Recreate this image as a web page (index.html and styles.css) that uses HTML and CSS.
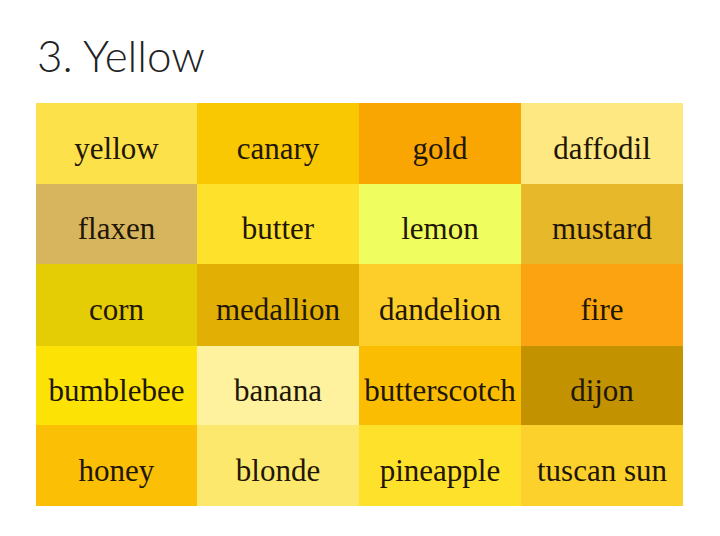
FILE: index.html
```html
<!DOCTYPE html>
<html>
<head>
<meta charset="utf-8">
<link rel="stylesheet" href="styles.css">
</head>
<body>
<main class="page">
  <h1 class="title">3. Yellow</h1>
  <div class="swatches">
    <div class="sw c-yellow">yellow</div>
    <div class="sw c-canary">canary</div>
    <div class="sw c-gold">gold</div>
    <div class="sw c-daffodil">daffodil</div>
    <div class="sw c-flaxen">flaxen</div>
    <div class="sw c-butter">butter</div>
    <div class="sw c-lemon">lemon</div>
    <div class="sw c-mustard">mustard</div>
    <div class="sw c-corn">corn</div>
    <div class="sw c-medallion">medallion</div>
    <div class="sw c-dandelion">dandelion</div>
    <div class="sw c-fire">fire</div>
    <div class="sw c-bumblebee">bumblebee</div>
    <div class="sw c-banana">banana</div>
    <div class="sw c-butterscotch">butterscotch</div>
    <div class="sw c-dijon">dijon</div>
    <div class="sw c-honey">honey</div>
    <div class="sw c-blonde">blonde</div>
    <div class="sw c-pineapple">pineapple</div>
    <div class="sw c-tuscan">tuscan sun</div>
  </div>
</main>
</body>
</html>
```

FILE: styles.css
```css
html, body {
  margin: 0;
  padding: 0;
  background: #ffffff;
}

.page {
  padding: 29px 36px 0 36px;
}

.title {
  margin: 0 0 22px 1px;
  font-family: Lato, "Open Sans", sans-serif;
  font-weight: 300;
  font-size: 44px;
  line-height: 52px;
  color: #222222;
}

.swatches {
  width: 647px;
  display: grid;
  grid-template-columns: 161px 162px 162px 162px;
  grid-template-rows: 81px 80px 82px 79px 81px;
}

.sw {
  display: flex;
  align-items: center;
  justify-content: center;
  padding-top: 10px;
  box-sizing: border-box;
  font-family: "Liberation Serif", "DejaVu Serif", serif;
  font-size: 31px;
  color: #1f1606;
  white-space: nowrap;
}

.c-yellow { background: #fde14b; }
.c-canary { background: #f9c802; }
.c-gold { background: #f9a602; }
.c-daffodil { background: #fee882; }
.c-flaxen { background: #d6b55e; }
.c-butter { background: #fee12b; }
.c-lemon { background: #effd5f; }
.c-mustard { background: #e7b829; }
.c-corn { background: #e4cd05; }
.c-medallion { background: #e2b005; }
.c-dandelion { background: #fdce2a; }
.c-fire { background: #fca311; }
.c-bumblebee { background: #fce205; }
.c-banana { background: #fff29e; }
.c-butterscotch { background: #fabd02; }
.c-dijon { background: #c29200; }
.c-honey { background: #fbbf06; }
.c-blonde { background: #fde86e; }
.c-pineapple { background: #fee12a; }
.c-tuscan { background: #fdd12c; }
```
